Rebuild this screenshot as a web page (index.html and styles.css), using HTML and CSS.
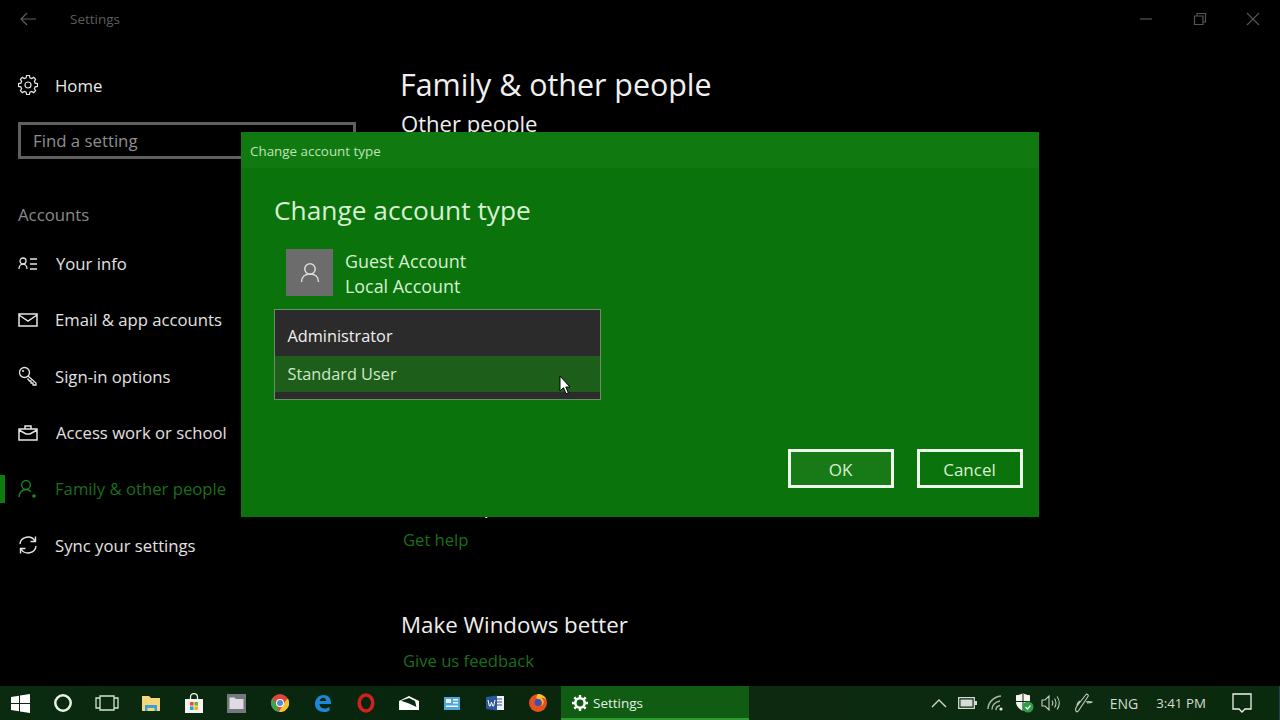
FILE: index.html
```html
<!DOCTYPE html>
<html lang="en">
<head>
<meta charset="UTF-8">
<title>Settings</title>
<link rel="stylesheet" href="styles.css">
</head>
<body>
<div class="window">
    <div class="titlebar">
        <svg class="back-icon" width="18" height="14" viewBox="0 0 18 14"><path d="M8 1 2 7l6 6M2 7h15" fill="none" stroke="#5e5e5e" stroke-width="1.2"/></svg>
        <span class="app-title">Settings</span>
        <div class="win-controls">
            <svg width="14" height="14" viewBox="0 0 14 14"><path d="M1 7h12" stroke="#555" stroke-width="1.2"/></svg>
            <svg width="14" height="14" viewBox="0 0 14 14"><path d="M1.5 4h8.5v8.500H1.500zM4 4V1.500h8.500V10H10" fill="none" stroke="#555" stroke-width="1.200"/></svg>
            <svg width="14" height="14" viewBox="0 0 14 14"><path d="M1 1l12 12M13 1 1 13" stroke="#555" stroke-width="1.200"/></svg>
        </div>
    </div>
    <div class="content">
        <aside class="sidebar">
            <a class="home-link">
                <svg class="nav-icon" width="20" height="20" viewBox="0 0 20 20"><path d="M8.500 0h3l.5 2.500 1.800.8L16 2l2 2-1.300 2.200.8 1.800 2.500.5v3l-2.500.5-.8 1.800L18 16l-2 2-2.200-1.300-1.800.8-.5 2.500h-3l-.5-2.500-1.800-.8L4 18l-2-2 1.300-2.200-.8-1.800L0 11.500v-3l2.500-.5.8-1.800L2 4l2-2 2.200 1.300L8 2.500z" transform="translate(.5 .5) scale(.95)" fill="none" stroke="#e6e6e6" stroke-width="1.300"/><circle cx="10" cy="10" r="3" fill="none" stroke="#e6e6e6" stroke-width="1.200"/></svg>
                <span>Home</span>
            </a>
            <div class="search-box">Find a setting</div>
            <div class="nav-group">Accounts</div>
            <nav class="nav-list">
                <a class="nav-item">
                    <svg class="nav-icon" width="20" height="16" viewBox="0 0 20 16"><circle cx="5" cy="5" r="3" fill="none" stroke="#e6e6e6" stroke-width="1.300"/><path d="M1 13c0-3 2-5 4-5s4 2 4 5M12 3h7M12 8h7M12 13h7" fill="none" stroke="#e6e6e6" stroke-width="1.300"/></svg>
                    <span class="nav-text-shift">Your info</span>
                </a>
                <a class="nav-item">
                    <svg class="nav-icon" width="20" height="16" viewBox="0 0 20 16"><path d="M1 2h18v12H1zM1 3l9 6 9-6" fill="none" stroke="#e6e6e6" stroke-width="1.500"/></svg>
                    <span>Email &amp; app accounts</span>
                </a>
                <a class="nav-item">
                    <svg class="nav-icon" width="20" height="20" viewBox="0 0 20 20"><circle cx="6.500" cy="6.500" r="5" fill="none" stroke="#e6e6e6" stroke-width="1.300"/><path d="M10 10l8 7v2h-3v-2h-2v-2h-1.500l-2-2.500" fill="none" stroke="#e6e6e6" stroke-width="1.300"/><circle cx="5" cy="5" r="1" fill="#e6e6e6"/></svg>
                    <span>Sign-in options</span>
                </a>
                <a class="nav-item">
                    <svg class="nav-icon" width="20" height="16" viewBox="0 0 20 16"><path d="M1 4h18v11H1zM7 4V1h6v3M1 5l7 4h4l7-4" fill="none" stroke="#e6e6e6" stroke-width="1.500"/></svg>
                    <span class="nav-text-shift">Access work or school</span>
                </a>
                <a class="nav-item active">
                    <svg class="nav-icon" width="20" height="20" viewBox="0 0 20 20"><circle cx="8" cy="6" r="4.300" fill="none" stroke="#1f8a1f" stroke-width="1.300"/><path d="M1 18c0-4 3-7.500 7-7.500 2 0 3.500.8 4.800 2M16 15v4M14 17h4" fill="none" stroke="#1f8a1f" stroke-width="1.300"/></svg>
                    <span>Family &amp; other people</span>
                </a>
                <a class="nav-item">
                    <svg class="nav-icon" width="20" height="20" viewBox="0 0 20 20"><path d="M2 9a8 7.500 0 0 1 15-3M18 11a8 7.500 0 0 1-15 3M17.500 1.500V6.500h-5M2.500 18.500V13.500h5" fill="none" stroke="#e6e6e6" stroke-width="1.400"/></svg>
                    <span>Sync your settings</span>
                </a>
            </nav>
        </aside>
        <main class="main">
            <h1 class="page-title">Family &amp; other people</h1>
            <h2 class="section-title">Other people</h2>
            <h2 class="question">Have a question?</h2>
            <a class="link help-link">Get help</a>
            <h2 class="better-title">Make Windows better</h2>
            <a class="link">Give us feedback</a>
        </main>
    </div>
</div>

<div class="dialog">
    <div class="dialog-bar">Change account type</div>
    <div class="dialog-body">
        <h2 class="dialog-title">Change account type</h2>
        <div class="account">
            <div class="avatar">
                <svg width="20" height="22" viewBox="0 0 20 22"><circle cx="10" cy="7" r="5.200" fill="none" stroke="#dcdcdc" stroke-width="1.500"/><path d="M1.500 20c0-5 3.500-8 8.500-8s8.500 3 8.500 8" fill="none" stroke="#dcdcdc" stroke-width="1.500"/></svg>
            </div>
            <div class="account-text">
                <div>Guest Account</div>
                <div>Local Account</div>
            </div>
        </div>
        <div class="type-list">
            <div class="type-item">Administrator</div>
            <div class="type-item selected">Standard User</div>
        </div>
        <div class="dialog-buttons">
            <button class="btn btn-hover">OK</button>
            <button class="btn">Cancel</button>
        </div>
    </div>
</div>
<svg class="cursor" width="12" height="20" viewBox="0 0 12 20"><path d="M1 1v15l3.500-3.300 2.500 6 2.300-1-2.500-5.700H11z" fill="#fff" stroke="#000" stroke-width="1"/></svg>

<footer class="taskbar">
    <div class="task-icon start">
        <svg width="19" height="19" viewBox="0 0 19 19"><path d="M0 3l8-1.200V9H0zM9 1.600 19 0v9H9zM0 10h8v7.200L0 16zM9 10h10v9L9 17.400z" fill="#fff"/></svg>
    </div>
    <div class="task-icon">
        <svg width="20" height="20" viewBox="0 0 20 20"><circle cx="10" cy="10" r="7.700" fill="none" stroke="#e8f2e8" stroke-width="2.500"/></svg>
    </div>
    <div class="task-icon task-view">
        <svg width="24" height="16" viewBox="0 0 24 16"><path d="M5 1h14v14H5zM5 3H1v10h4M19 3h4v10h-4" fill="none" stroke="#d5e3d5" stroke-width="1.300"/></svg>
    </div>
    <div class="task-icon">
        <svg width="18" height="16" viewBox="0 0 18 16"><path d="M0 1h7l2 2h9v13H0z" fill="#f5d67a"/><path d="M3 16v-6h12v6h-2.500v-3h-7v3z" fill="#3aa0d8"/></svg>
    </div>
    <div class="task-icon">
        <svg width="18" height="20" viewBox="0 0 18 20"><path d="M5.500 6V4a3.500 3.500 0 0 1 7 0v2" fill="none" stroke="#f0f0f0" stroke-width="1.300"/><path d="M0 6h18v14H0z" fill="#f4f4f4"/><path d="M5 9h3.600v3.600H5z" fill="#e8542a"/><path d="M9.400 9H13v3.600H9.400z" fill="#6fb52c"/><path d="M5 13.400h3.600V17H5z" fill="#2a9fe0"/><path d="M9.400 13.400H13V17H9.400z" fill="#f4b400"/></svg>
    </div>
    <div class="task-icon">
        <svg width="19" height="19" viewBox="0 0 19 19"><path d="M0 0h19v19H0z" fill="#77777f"/><path d="M2.500 3.500h5l1.500 1.500h7.500v10h-14z" fill="#dcdce2"/></svg>
    </div>
    <div class="task-icon">
        <svg width="18" height="18" viewBox="0 0 18 18"><circle cx="9" cy="9" r="9" fill="#e0463a"/><path d="M16.800 4.500A9 9 0 0 1 8 18l4-8z" fill="#f4c430"/><path d="M1.500 4 6 11.500 8 18A9 9 0 0 1 1.500 4z" fill="#3aa54a"/><circle cx="9" cy="9" r="4" fill="#fff"/><circle cx="9" cy="9" r="3" fill="#4a90d9"/></svg>
    </div>
    <div class="task-icon">
        <svg width="18" height="18" viewBox="0 0 18 18"><path d="M1 10c0-5 3.500-9 8.500-9 4.500 0 7.500 3 7.500 7.500V10H5.500c.2 2.800 2.300 4.500 5 4.500 2 0 3.700-.6 5-1.500v3.500c-1.500 1-3.300 1.500-5.500 1.500C5 18 1 15 1 10zm4.700-3h6.600C12 5 11 3.700 9.200 3.700 7.500 3.700 6.200 5 5.700 7z" fill="#1d86d8"/></svg>
    </div>
    <div class="task-icon">
        <svg width="18" height="20" viewBox="0 0 18 20"><ellipse cx="9" cy="10" rx="6.800" ry="8" fill="none" stroke="#d02020" stroke-width="3.600"/></svg>
    </div>
    <div class="task-icon">
        <svg width="20" height="14" viewBox="0 0 20 14"><path d="M0 5 10 0l10 5v9H0z" fill="#fff"/><path d="M2 4.800 10 7.500l7.500 3.500-1.500-6-6-3z" fill="#0a2a0e"/></svg>
    </div>
    <div class="task-icon">
        <svg width="16" height="13" viewBox="0 0 16 13"><path d="M0 0h16v13H0z" fill="#4ea6dc"/><path d="M2 2h5v4H2z" fill="#e8f4fa"/><path d="M9 2h5v1.500H9zM9 5h5v1.500H9zM2 8.500h12V10H2z" fill="#f4f8fb"/></svg>
    </div>
    <div class="task-icon">
        <svg width="18" height="16" viewBox="0 0 18 16"><path d="M8 1h10v14H8z" fill="#f0f2f5"/><path d="M10 4h6M10 7h6M10 10h6" stroke="#2b579a" stroke-width="1.200"/><path d="M0 2l11-1.500v15L0 14z" fill="#2b579a"/><path d="M2 5l1.300 6h1l1.200-4 1.200 4h1L9 5" fill="none" stroke="#fff" stroke-width="1"/></svg>
    </div>
    <div class="task-icon">
        <svg width="18" height="18" viewBox="0 0 18 18"><circle cx="9" cy="9" r="9" fill="#e4521f"/><path d="M9 0c4 0 7.500 2.500 8.500 6-1.500-1.800-3.500-2.600-5.500-2.300 1.800 1 2.800 2.800 2.600 4.800-.2 1.500-1 2.800-2.300 3.500 2-3 .5-6.500-3.300-7-1.500-.2-2.500-2-0-5z" fill="#f7c033"/><circle cx="9" cy="8.500" r="3.400" fill="#3b4fb8"/></svg>
    </div>
    <div class="task-active">
        <svg width="16" height="16" viewBox="0 0 16 16"><circle cx="8" cy="8" r="4.700" fill="none" stroke="#fff" stroke-width="2.600"/><path d="M8 0v3M8 13v3M0 8h3M13 8h3M2.300 2.300l2.100 2.100M11.600 11.600l2.100 2.100M13.700 2.300l-2.100 2.100M4.400 11.600l-2.100 2.100" stroke="#fff" stroke-width="2.400"/></svg>
        <span>Settings</span>
    </div>
    <div class="tray">
        <div class="tray-item tray-chevron"><svg width="16" height="10" viewBox="0 0 16 10"><path d="M1 9l7-7 7 7" fill="none" stroke="#cfd8cf" stroke-width="1.400"/></svg></div>
        <div class="tray-item tray-battery"><svg width="19" height="12" viewBox="0 0 19 12"><path d="M.7.700h15.600v10.600H.7z" fill="#10260f" stroke="#d6dcd6" stroke-width="1.300"/><path d="M2.500 2.500h12v7h-12z" fill="#d6dcd6"/><path d="M17 4h2v4h-2z" fill="#d6dcd6"/></svg></div>
        <div class="tray-item tray-wifi"><svg width="18" height="16" viewBox="0 0 18 16"><path d="M1 14C1 8 6 2 14 1M5 14.500c0-4 3-7.500 8-8.500M9 15c0-2.500 1.500-4 4-4.500" fill="none" stroke="#aab4aa" stroke-width="1.500"/><circle cx="14" cy="14" r="1.600" fill="#e4e8e4"/></svg></div>
        <div class="tray-item tray-shield"><svg width="20" height="20" viewBox="0 0 20 20"><path d="M9 0c2 1.500 4 2 7 2.200V9c0 4-3 7-7 9-4-2-7-5-7-9V2.200C5 2 7 1.500 9 0z" fill="#f4f4f4"/><path d="M9 0v18M2 8.500h14" stroke="#10260f" stroke-width="1"/><circle cx="14" cy="14" r="5.500" fill="#2f9e44"/><path d="M11.500 14l2 2 3-3.500" fill="none" stroke="#fff" stroke-width="1.200"/></svg></div>
        <div class="tray-item tray-volume"><svg width="20" height="16" viewBox="0 0 20 16"><path d="M1 5h3l4-4v14l-4-4H1zM11 5.500c1 1.500 1 3.500 0 5M13.500 3.500c2 2.500 2 6.500 0 9M16 1.500c3 3.500 3 9.500 0 13" fill="none" stroke="#c4ccc4" stroke-width="1.100"/></svg></div>
        <div class="tray-item tray-pen"><svg width="20" height="20" viewBox="0 0 20 20"><path d="M3 19c-2-1-2-3 0-6L12 1.500c1-1 3 .5 2 2L6 15.500C5 17 5 18 3 19zM12 9c2-1 4-.5 6 0-1 1-3 1-5 1M6 8c-2 1-3 3-3 5" fill="none" stroke="#c4ccc4" stroke-width="1.100"/></svg></div>
        <div class="tray-item tray-lang">ENG</div>
        <div class="tray-item tray-clock">3:41 PM</div>
        <div class="tray-item tray-notify"><svg width="20" height="20" viewBox="0 0 20 20"><path d="M1 1h18v15h-6l-3 3-3-3H1z" fill="none" stroke="#eef2ee" stroke-width="1.300"/></svg></div>
    </div>
</footer>
</body>
</html>
```

FILE: styles.css
```css
* {
    box-sizing: border-box;
}
body {
    margin: 0;
    width: 1280px;
    height: 720px;
    overflow: hidden;
    position: relative;
    background: #000;
    color: #e6e6e6;
    font-family: "Open Sans", "Noto Sans", sans-serif;
    display: flex;
    flex-direction: column;
}
h1, h2, p {
    margin: 0;
    font-weight: normal;
}
.window {
    height: 686px;
    display: flex;
    flex-direction: column;
}
.titlebar {
    height: 38px;
    display: flex;
    align-items: center;
    padding-left: 19px;
}
.back-icon {
    margin-right: 33px;
}
.app-title {
    font-size: 13.500px;
    color: #5c5c5c;
}
.win-controls {
    margin-left: auto;
    display: flex;
    gap: 39.500px;
    padding-right: 20px;
}
.content {
    flex: 1;
    display: flex;
}
.sidebar {
    width: 400px;
    padding-left: 18px;
    position: relative;
}
.home-link {
    height: 36px;
    margin-top: 29px;
    display: flex;
    align-items: center;
    font-size: 16.800px;
    color: #e8e8e8;
}
.nav-icon {
    flex: none;
    margin-right: 17px;
}
.search-box {
    width: 338px;
    height: 37px;
    margin-top: 19px;
    border: 3px solid #5f5f5f;
    padding-left: 12px;
    font-size: 16.800px;
    line-height: 31px;
    color: #8f8f8f;
}
.nav-group {
    margin-top: 43px;
    font-size: 16.800px;
    line-height: 26px;
    color: #8a8a8a;
}
.nav-list {
    margin-top: 7.500px;
    margin-left: -18px;
}
.nav-item {
    height: 56.300px;
    padding-left: 18px;
    display: flex;
    align-items: center;
    font-size: 16.700px;
    color: #e2e2e2;
}
.nav-text-shift {
    margin-left: 1px;
}
.nav-item.active {
    color: #1b6e1b;
    position: relative;
}
.nav-item.active::before {
    content: "";
    position: absolute;
    left: 0;
    top: 14px;
    width: 5px;
    height: 28px;
    background: #107c10;
}
.main {
    flex: 1;
}
.page-title {
    margin-top: 26px;
    font-size: 30.400px;
    line-height: 42px;
    color: #f0f0f0;
}
.section-title {
    margin-top: 2px;
    margin-left: 1px;
    font-size: 22.100px;
    line-height: 30px;
    color: #eeeeee;
}
.question {
    margin-top: 350.500px;
    font-size: 22px;
    line-height: 30px;
    color: #eeeeee;
}
.link {
    display: block;
    margin-left: 3px;
    font-size: 16.600px;
    line-height: 24px;
    color: #1b6e1b;
}
.help-link {
    margin-top: 9.500px;
}
.better-title {
    margin-top: 58px;
    margin-left: 1px;
    font-size: 22.300px;
    line-height: 30px;
    color: #eeeeee;
}
.better-title + .link {
    margin-top: 9px;
}
.dialog {
    position: absolute;
    left: 241px;
    top: 132px;
    width: 798px;
    height: 385px;
    background: #0b730b;
    display: flex;
    flex-direction: column;
}
.dialog-bar {
    height: 36px;
    padding-left: 9px;
    font-size: 13.400px;
    line-height: 38px;
    color: #bfe3b8;
    background: #107a10;
}
.dialog-body {
    flex: 1;
    padding: 24px 16px 29px 33px;
    display: flex;
    flex-direction: column;
}
.dialog-title {
    font-size: 26.300px;
    line-height: 36px;
    color: #d8f0d2;
}
.account {
    margin-top: 21px;
    margin-left: 12px;
    display: flex;
    gap: 12px;
}
.avatar {
    width: 47px;
    height: 47px;
    background: #6c6c6c;
    display: flex;
    align-items: center;
    justify-content: center;
}
.account-text {
    font-size: 17.900px;
    line-height: 25px;
    color: #d8f0d2;
}
.type-list {
    width: 327px;
    height: 91px;
    margin-top: 10px;
    padding-top: 8px;
    background: #2b2b2b;
    border: 1px solid #6b8f6b;
    font-size: 16.300px;
}
.type-item {
    height: 37.500px;
    padding-left: 12.500px;
    line-height: 37px;
    color: #f0f0f0;
}
.type-item.selected {
    height: 36.500px;
    color: #cfe8ca;
    background: #1d5f1a;
}
.dialog-buttons {
    margin-top: auto;
    display: flex;
    justify-content: flex-end;
    gap: 23px;
}
.btn {
    width: 106px;
    height: 39px;
    border: 3px solid #eef7ec;
    background: transparent;
    font-family: inherit;
    font-size: 17px;
    color: #d8f0d2;
    padding: 1px 1px 0 0;
}
.btn-hover {
    background: #177a17;
}
.cursor {
    position: absolute;
    left: 559px;
    top: 375px;
}
.taskbar {
    height: 34px;
    display: flex;
    align-items: center;
    background: linear-gradient(90deg, #0b2b10 0%, #08250d 30%, #0d2a10 60%, #0a2a0e 100%);
}
.task-icon {
    width: 43px;
    height: 34px;
    flex: none;
    display: flex;
    align-items: center;
    justify-content: center;
}
.start {
    width: 41px;
}
.task-view {
    width: 45px;
}
.task-active {
    width: 188px;
    height: 34px;
    margin-left: 2px;
    padding: 2px 0 0 11px;
    display: flex;
    align-items: center;
    gap: 5px;
    font-size: 13.500px;
    color: #e4efe4;
    background: #0f5c12;
    border-bottom: 2px solid #2f9a2f;
}
.tray {
    margin-left: auto;
    display: flex;
    height: 34px;
    padding-right: 12px;
    border-right: 1px solid #1f3f5f;
    font-size: 14px;
    color: #d4dcd4;
}
.tray-item {
    display: flex;
    align-items: center;
    justify-content: center;
}
.tray-chevron, .tray-battery, .tray-volume {
    width: 28px;
}
.tray-wifi {
    width: 29px;
}
.tray-shield {
    width: 27px;
}
.tray-pen {
    width: 38px;
}
.tray-lang {
    width: 42px;
}
.tray-clock {
    width: 72px;
    font-size: 13.300px;
}
.tray-notify {
    width: 50px;
}
```
